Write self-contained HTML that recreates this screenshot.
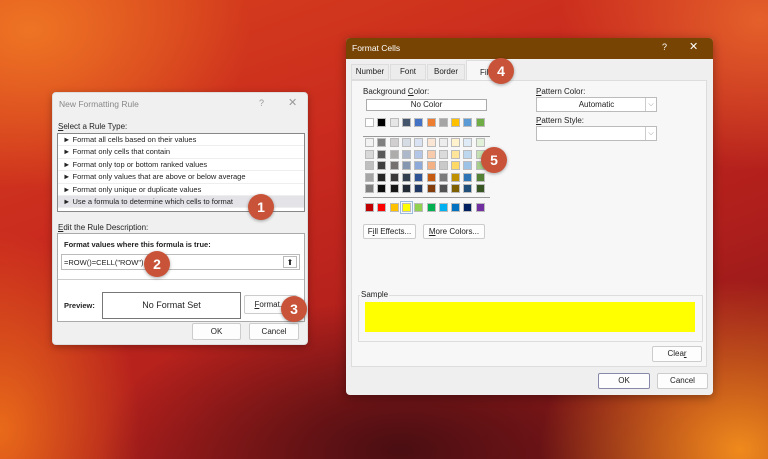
<!DOCTYPE html>
<html><head><style>
*{margin:0;padding:0;box-sizing:border-box}
body{width:768px;height:459px;overflow:hidden;position:relative;font-family:"Liberation Sans",sans-serif;font-size:8px;color:#222;
background:
radial-gradient(ellipse 220px 160px at 30px 30px,#ee7424 0%,rgba(238,116,36,0) 100%),
radial-gradient(ellipse 200px 150px at 760px 20px,#e4602a 0%,rgba(228,96,42,0) 100%),
radial-gradient(ellipse 200px 170px at 740px 450px,#f08a1c 0%,rgba(240,138,28,0) 100%),
radial-gradient(ellipse 300px 150px at 400px 450px,#4a0e12 0%,rgba(74,14,18,0) 100%),
radial-gradient(ellipse 140px 200px at 0px 430px,#e96a1a 0%,rgba(233,106,26,0) 100%),
linear-gradient(160deg,#d8421c 0%,#c92a1e 35%,#b01f1c 65%,#7a1418 100%);}
.abs{position:absolute}
.btn{position:absolute;background:#fdfdfd;border:1px solid #ccc;border-radius:2px;text-align:center;font-size:8px;color:#222}
.circ{position:absolute;width:26px;height:26px;border-radius:50%;background:#c95338;color:#fff;font-weight:bold;font-size:14px;text-align:center;line-height:26px;box-shadow:0 1px 3px rgba(0,0,0,.35)}
.row{height:12.4px;line-height:12.4px;padding-left:5px;border-bottom:1px solid #eee;font-size:7.5px}
.sw{position:absolute;width:9px;height:9px;border:1px solid #bbb}
</style></head><body>

<!-- Left dialog -->
<div class="abs" style="left:52px;top:92px;width:256px;height:253px;background:#f0f0f0;border:1px solid #ddd;border-radius:4px;box-shadow:0 2px 8px rgba(0,0,0,.3)">
  <div class="abs" style="left:6px;top:6px;color:#888;font-size:8.5px">New Formatting Rule</div>
  <div class="abs" style="left:206px;top:5px;color:#999;font-size:9px">?</div>
  <div class="abs" style="left:235px;top:3px;color:#999;font-size:11px">✕</div>
  <div class="abs" style="left:5px;top:29px;font-size:8px"><u>S</u>elect a Rule Type:</div>
  <div class="abs" style="left:4px;top:40px;width:248px;height:79px;background:#fff;border:1px solid #888">
    <div class="row">► Format all cells based on their values</div>
    <div class="row">► Format only cells that contain</div>
    <div class="row">► Format only top or bottom ranked values</div>
    <div class="row">► Format only values that are above or below average</div>
    <div class="row">► Format only unique or duplicate values</div>
    <div class="row" style="background:#e3e3e8">► Use a formula to determine which cells to format</div>
  </div>
  <div class="abs" style="left:5px;top:130px"><u>E</u>dit the Rule Description:</div>
  <div class="abs" style="left:4px;top:140px;width:248px;height:89px;background:#fff;border:1px solid #aaa">
    <div class="abs" style="left:6px;top:6px;font-weight:bold;font-size:7.5px">Format values where this formula is true:</div>
    <div class="abs" style="left:3px;top:20px;width:239px;height:16px;border:1px solid #bbb;padding:3px 2px;font-size:7.5px">=ROW()=CELL("ROW")</div>
    <div class="abs" style="left:225px;top:22px;width:14px;height:12px;border:1px solid #bbb;text-align:center;font-size:8px;line-height:11px">⬆</div>
    <div class="abs" style="left:0;top:45px;width:246px;border-top:1px solid #ccc"></div>
    <div class="abs" style="left:6px;top:67px;font-weight:bold;font-size:7.5px">Preview:</div>
    <div class="abs" style="left:44px;top:58px;width:139px;height:27px;border:1px solid #777;text-align:center;line-height:25px;font-size:9px">No Format Set</div>
  </div>
  <div class="btn" style="left:191px;top:202px;width:53px;height:19px;line-height:17px"><u>F</u>ormat...</div>
  <div class="btn" style="left:139px;top:230px;width:49px;height:17px;line-height:15px">OK</div>
  <div class="btn" style="left:196px;top:230px;width:50px;height:17px;line-height:15px">Cancel</div>
</div>

<!-- Right dialog -->
<div class="abs" style="left:346px;top:38px;width:367px;height:357px;background:#efefef;border-radius:4px;box-shadow:0 2px 10px rgba(0,0,0,.35);overflow:hidden">
  <div class="abs" style="left:0;top:0;width:367px;height:21px;background:#774404"></div>
  <div class="abs" style="left:6px;top:5px;color:#fff;font-size:8.5px">Format Cells</div>
  <div class="abs" style="left:316px;top:4px;color:#fff;font-size:9px">?</div>
  <div class="abs" style="left:343px;top:2px;color:#fff;font-size:11px">✕</div>
  <div class="abs" style="left:5px;top:26px;width:38px;height:16px;background:#ececec;border:1px solid #ddd;text-align:center;line-height:14px">Number</div>
  <div class="abs" style="left:44px;top:26px;width:36px;height:16px;background:#ececec;border:1px solid #ddd;text-align:center;line-height:14px">Font</div>
  <div class="abs" style="left:81px;top:26px;width:38px;height:16px;background:#ececec;border:1px solid #ddd;text-align:center;line-height:14px">Border</div>
  <div class="abs" style="left:120px;top:22px;width:40px;height:21px;background:#f7f7f7;border:1px solid #ddd;border-bottom:none;padding:7px 0 0 13px">Fill</div>
  <div class="abs" style="left:5px;top:42px;width:356px;height:287px;background:#f7f7f7;border:1px solid #ddd">
    <div class="abs" style="left:11px;top:6px">Background <u>C</u>olor:</div>
    <div class="abs" style="left:14px;top:18px;width:121px;height:12px;background:#fff;border:1px solid #aaa;text-align:center;line-height:10px">No Color</div>
    <div class="abs" style="left:11px;top:55px;width:127px;border-top:1px solid #999"></div>
    <div class="abs" style="left:11px;top:116px;width:127px;border-top:1px solid #999"></div>
    <div class="btn" style="left:11px;top:143px;width:53px;height:15px;line-height:13px">F<u>i</u>ll Effects...</div>
    <div class="btn" style="left:71px;top:143px;width:62px;height:15px;line-height:13px"><u>M</u>ore Colors...</div>
    <div class="abs" style="left:184px;top:6px"><u>P</u>attern Color:</div>
    <div class="abs" style="left:184px;top:16px;width:121px;height:15px;background:#fff;border:1px solid #bbb;text-align:center;line-height:13px">Automatic</div>
    <div class="abs" style="left:293px;top:17px;width:11px;height:13px;border-left:1px solid #ccc;color:#888;font-size:7px;text-align:center;line-height:13px">⌵</div>
    <div class="abs" style="left:184px;top:35px"><u>P</u>attern Style:</div>
    <div class="abs" style="left:184px;top:45px;width:121px;height:15px;background:#fff;border:1px solid #bbb"></div>
    <div class="abs" style="left:293px;top:46px;width:11px;height:13px;border-left:1px solid #ccc;color:#888;font-size:7px;text-align:center;line-height:13px">⌵</div>
    <div class="abs" style="left:6px;top:214px;width:345px;height:47px;border:1px solid #ddd"></div>
    <div class="abs" style="left:8px;top:209px;background:#f7f7f7;padding:0 1px">Sample</div>
    <div class="abs" style="left:13px;top:221px;width:330px;height:30px;background:#ffff00"></div>
    <div class="btn" style="left:300px;top:265px;width:50px;height:16px;line-height:14px">Clea<u>r</u></div>
  </div>
  <div class="btn" style="left:252px;top:335px;width:52px;height:16px;line-height:14px;border-color:#88a">OK</div>
  <div class="btn" style="left:311px;top:335px;width:51px;height:16px;line-height:14px">Cancel</div>
</div>

<div id="sw"></div>
<div class="circ" style="left:248px;top:194px">1</div>
<div class="circ" style="left:144px;top:251px">2</div>
<div class="circ" style="left:281px;top:296px">3</div>
<div class="circ" style="left:488px;top:58px">4</div>
<div class="circ" style="left:481px;top:147px">5</div>

<script>
var rows=[
[118,["#fff","#000","#e7e6e6","#44546a","#4472c4","#ed7d31","#a5a5a5","#ffc000","#5b9bd5","#70ad47"]],
[138,["#f2f2f2","#7f7f7f","#d0cece","#d6dce4","#d9e2f3","#fbe5d5","#ededed","#fff2cc","#deebf6","#e2efd9"]],
[149.5,["#d8d8d8","#595959","#aeabab","#adb9ca","#b4c6e7","#f7cbac","#dbdbdb","#fee599","#bdd7ee","#c5e0b3"]],
[161,["#bfbfbf","#3f3f3f","#757070","#8496b0","#8eaadb","#f4b183","#c9c9c9","#ffd965","#9cc3e5","#a8d08d"]],
[172.5,["#a5a5a5","#262626","#3a3838","#323f4f","#2f5496","#c55a11","#7b7b7b","#bf9000","#2e75b5","#538135"]],
[184,["#7f7f7f","#0c0c0c","#171616","#222a35","#1f3864","#833c0b","#525252","#7f6000","#1f4e79","#375623"]],
[203,["#c00000","#ff0000","#ffc000","#ffff00","#92d050","#00b050","#00b0f0","#0070c0","#002060","#7030a0"]]];
var h="";
rows.forEach(function(r){r[1].forEach(function(c,i){var x=365+i*12.3,y=r[0];
var extra=(r[0]==203&&i==3)?"outline:1px solid #9bd;outline-offset:1px;":"";
h+='<div class="sw" style="left:'+x+'px;top:'+y+'px;background:'+c+';'+extra+'"></div>';});});
document.getElementById('sw').innerHTML=h;
</script>
</body></html>
